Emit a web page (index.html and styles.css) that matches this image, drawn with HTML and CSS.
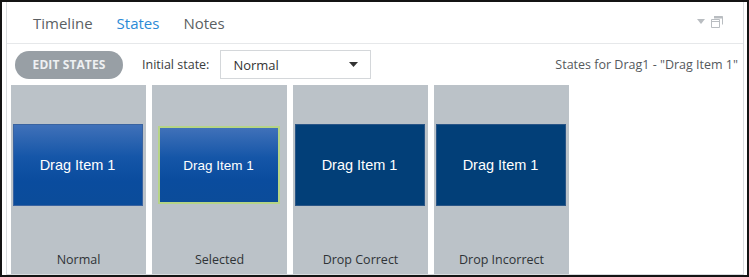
FILE: index.html
```html
<!DOCTYPE html>
<html>
<head>
<meta charset="utf-8">
<link rel="stylesheet" href="styles.css">
</head>
<body>
<div class="frame">
  <div class="panel">
    <div class="header">
      <nav class="tabs">
        <span class="tab">Timeline</span>
        <span class="tab active">States</span>
        <span class="tab">Notes</span>
      </nav>
      <div class="win-icons">
        <svg class="caret-small" width="8" height="5" viewBox="0 0 8 5"><path d="M0 0H8L4 5Z" fill="#b9bdc1"/></svg>
        <svg class="restore" width="12" height="12" viewBox="0 0 12 12"><path d="M3 .5H11.5V8.5M.5 3.5H8.5V11.5H.5Z M.5 5.5H8.5" fill="none" stroke="#b9bdc1" stroke-width="1"/><path d="M3 .5H11.5V2.5H3Z" fill="#b9bdc1"/></svg>
      </div>
    </div>
    <div class="toolbar">
      <button class="pill">EDIT STATES</button>
      <span class="label">Initial state:</span>
      <div class="select">
        <span>Normal</span>
        <svg width="9" height="5" viewBox="0 0 9 5"><path d="M0 0H9L4.5 5Z" fill="#333"/></svg>
      </div>
      <span class="info">States for Drag1 - "Drag Item 1"</span>
    </div>
    <div class="cards">
      <div class="card">
        <div class="stage"><div class="item grad">Drag Item 1</div></div>
        <div class="name">Normal</div>
      </div>
      <div class="card">
        <div class="stage"><div class="item grad selected">Drag Item 1</div></div>
        <div class="name">Selected</div>
      </div>
      <div class="card">
        <div class="stage"><div class="item dark">Drag Item 1</div></div>
        <div class="name">Drop Correct</div>
      </div>
      <div class="card">
        <div class="stage"><div class="item dark">Drag Item 1</div></div>
        <div class="name">Drop Incorrect</div>
      </div>
    </div>
  </div>
</div>
</body>
</html>
```
FILE: styles.css
```css
* { box-sizing: border-box; }
html, body { margin: 0; padding: 0; background: #fff; }
body { font-family: "Open Sans", "Noto Sans", sans-serif; }
.frame {
  width: 749px;
  height: 277px;
  border: 2px solid #141414;
  overflow: hidden;
  padding: 0 3px 0 4px;
  background: #fff;
}
.panel {
  height: 100%;
  border-left: 1px solid #d9dcdf;
  border-right: 1px solid #d9dcdf;
  border-bottom: 1px solid #d9dcdf;
  display: flex;
  flex-direction: column;
}
.header {
  height: 42px;
  border-bottom: 1px solid #e6e8ea;
  display: flex;
  align-items: center;
  justify-content: space-between;
  padding: 0 20px 0 26px;
}
.tabs { display: flex; gap: 24px; font-size: 15px; color: #5b5f63; padding-top: 1px; }
.tab.active { color: #2b8ad6; }
.win-icons { display: flex; align-items: center; gap: 6px; padding-bottom: 2px; }
.toolbar {
  height: 41px;
  display: flex;
  align-items: center;
  padding: 0 5px 0 8px;
  font-size: 12.5px;
  color: #3a3d40;
}
.pill {
  width: 108px;
  height: 28px;
  border: none;
  border-radius: 14px;
  background: #989fa5;
  color: #eef0f2;
  font-family: inherit;
  font-weight: 700;
  font-size: 12px;
  letter-spacing: 0.1px;
  margin-right: 19px;
  padding: 0;
}
.label { margin-right: 11px; }
.select {
  width: 151px;
  height: 29px;
  border: 1px solid #d4d7da;
  display: flex;
  align-items: center;
  justify-content: space-between;
  padding: 0 12px 0 12px;
  font-size: 13px;
  color: #333;
}
.info { margin-left: auto; color: #55595d; }
.cards {
  flex: 1;
  display: flex;
  gap: 6px;
  padding: 0 0 0 4px;
  min-height: 0;
}
.card {
  width: 135px;
  background: #bbc2c8;
  display: flex;
  flex-direction: column;
  align-items: center;
}
.stage {
  height: 162px;
  display: flex;
  align-items: center;
  justify-content: center;
  padding-bottom: 2px;
  width: 100%;
}
.item {
  width: 130px;
  height: 82px;
  display: flex;
  align-items: center;
  justify-content: center;
  color: #fff;
  font-family: "Liberation Sans", Arial, sans-serif;
  font-size: 14.5px;
  margin-right: 2px;
}
.grad {
  background: linear-gradient(#4071b9 0%, #1556a8 40%, #0a4c9e 70%, #0b4c9a 100%);
  border: 1px solid #3a63a0;
}
.grad.selected {
  width: 122px;
  height: 78px;
  border: 2px solid #b6d486;
  font-size: 13.5px;
}
.dark {
  background: #023f78;
  border: 1px solid #2a5586;
}
.name {
  font-size: 12.5px;
  color: #2f3337;
  margin-top: 4px;
}
```
